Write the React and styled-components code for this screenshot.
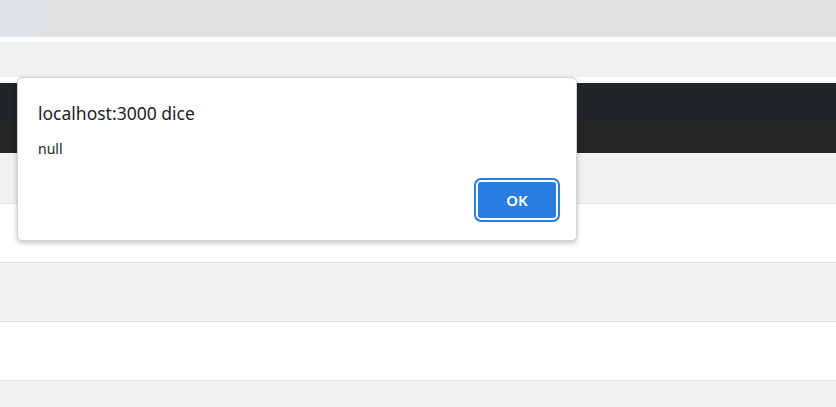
import React from 'react';
import styled, { createGlobalStyle } from 'styled-components';

const GlobalStyle = createGlobalStyle`
  html, body {
    margin: 0;
    padding: 0;
    background: #ffffff;
    overflow: hidden;
  }
  body {
    font-family: "Noto Sans", "Open Sans", sans-serif;
  }
`;

const Page = styled.div`
  position: relative;
  width: 836px;
  height: 407px;
  overflow: hidden;
  background: #ffffff;
`;

const TabStrip = styled.div`
  display: grid;
  grid-template-columns: 42px 1fr;
  height: 37px;
  margin-bottom: 5px;

  .lead {
    background: #dee1e5;
  }
  .rest {
    background: #e0e0e2;
  }
`;

const AddressBar = styled.div`
  height: 35px;
  background: #eff1f3;
  margin-bottom: 6px;
`;

const TableHead = styled.div`
  display: flex;
  flex-direction: column;

  .top {
    height: 38px;
    background: #212529;
  }
  .bottom {
    height: 32px;
    background: #252525;
  }
`;

const Row = styled.div`
  height: ${p => p.h}px;
  background: ${p => (p.striped ? '#f1f1f1' : '#ffffff')};
  border-bottom: 1px solid #dedede;
`;

const Dialog = styled.div`
  position: absolute;
  left: 17px;
  top: 77px;
  width: 560px;
  height: 164px;
  box-sizing: border-box;
  background: #ffffff;
  border: 1px solid #d4d4d4;
  border-radius: 5px;
  box-shadow: 0 2px 5px rgba(0, 0, 0, 0.25);
  padding: 23px 19px 21px 20px;
  display: flex;
  flex-direction: column;
`;

const Title = styled.div`
  font-size: 17.5px;
  color: #202124;
  line-height: 24px;
`;

const Message = styled.div`
  margin-top: 14px;
  font-size: 14px;
  color: #202124;
  line-height: 20px;
`;

const Actions = styled.div`
  display: flex;
  justify-content: flex-end;
  margin-top: auto;
`;

const OkButton = styled.button`
  width: 80px;
  height: 38px;
  border: none;
  border-radius: 4px;
  background: #2b7de1;
  color: #ffffff;
  font-family: "Noto Sans", "Open Sans", sans-serif;
  font-size: 15px;
  font-weight: 600;
  outline: 2px solid #2b7de1;
  outline-offset: 1px;
  box-shadow: inset 0 0 0 1px #ffffff;
  cursor: pointer;
`;

const rows = [
  { h: 50, striped: true },
  { h: 58, striped: false },
  { h: 58, striped: true },
  { h: 58, striped: false },
  { h: 58, striped: true },
];

export default function App() {
  return (
    <Page>
      <GlobalStyle />
      <TabStrip>
        <div className="lead" />
        <div className="rest" />
      </TabStrip>
      <AddressBar />
      <TableHead>
        <div className="top" />
        <div className="bottom" />
      </TableHead>
      {rows.map((r, i) => (
        <Row key={i} h={r.h} striped={r.striped} />
      ))}
      <Dialog>
        <Title>localhost:3000 dice</Title>
        <Message>null</Message>
        <Actions>
          <OkButton>OK</OkButton>
        </Actions>
      </Dialog>
    </Page>
  );
}
